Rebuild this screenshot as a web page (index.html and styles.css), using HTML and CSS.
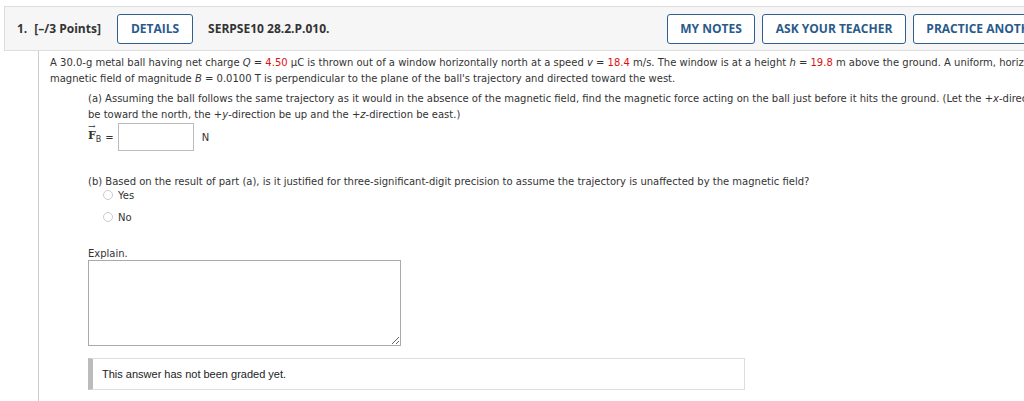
FILE: index.html
```html
<!DOCTYPE html>
<html>
<head>
<meta charset="utf-8">
<link rel="stylesheet" href="styles.css">
</head>
<body>
<div class="question">
  <div class="header">
    <span class="num">1.</span>
    <span class="points">[–/3 Points]</span>
    <button class="btn details">DETAILS</button>
    <span class="code">SERPSE10 28.2.P.010.</span>
    <div class="right">
      <button class="btn rbtn">MY NOTES</button>
      <button class="btn rbtn">ASK YOUR TEACHER</button>
      <button class="btn rbtn">PRACTICE ANOTHER</button>
    </div>
  </div>
  <div class="body">
    <p class="intro">A 30.0-g metal ball having net charge <i>Q</i> = <span class="red">4.50</span> μC is thrown out of a window horizontally north at a speed <i>v</i> = <span class="red">18.4</span> m/s. The window is at a height <i>h</i> = <span class="red">19.8</span> m above the ground. A uniform, horizontal<br>magnetic field of magnitude <i>B</i> = 0.0100 T is perpendicular to the plane of the ball's trajectory and directed toward the west.</p>
    <div class="part">
      <p>(a) Assuming the ball follows the same trajectory as it would in the absence of the magnetic field, find the magnetic force acting on the ball just before it hits the ground. (Let the +<i>x</i>-direction<br>be toward the north, the +<i>y</i>-direction be up and the +<i>z</i>-direction be east.)</p>
      <div class="answer">
        <span class="fb"><span class="vec">F</span><sub>B</sub></span>
        <span class="eq">=</span>
        <input class="ans" type="text">
        <span class="unit">N</span>
      </div>
      <p class="pb">(b) Based on the result of part (a), is it justified for three-significant-digit precision to assume the trajectory is unaffected by the magnetic field?</p>
      <div class="opts">
        <label class="opt"><span class="radio"></span>Yes</label>
        <label class="opt"><span class="radio"></span>No</label>
      </div>
      <p class="explain">Explain.</p>
      <textarea class="ta"></textarea>
      <div class="graded">This answer has not been graded yet.</div>
    </div>
  </div>
</div>
</body>
</html>
```
FILE: styles.css
```css
html, body { margin: 0; padding: 0; overflow: hidden; background: #fff; }
body { font-family: "DejaVu Sans", Verdana, sans-serif; font-size: 10px; color: #333; }
.question { margin: 6px 0 0 4px; width: 1200px; }
.header {
  display: flex; align-items: center; box-sizing: border-box;
  height: 45px; background: #f6f6f6;
  border: 1px solid #ddd; border-right: none;
  padding-left: 12px; width: 1054px;
  font-family: "Open Sans", sans-serif; font-weight: 700; font-size: 12px; color: #333;
}
.num { margin-right: 7px; }
.points { margin-right: 16px; }
.btn {
  font-family: "Open Sans", sans-serif; font-weight: 700; font-size: 12px;
  color: #2a5a8a; background: #fff; border: 1px solid #2f5f90; border-radius: 3px;
  height: 30px; padding: 0 13px; margin: 0;
}
.rbtn { padding: 0 12.5px; }
.details { margin-right: 15px; }
.right { margin-left: auto; display: flex; gap: 7px; }
.body { margin-left: 34px; border-left: 1px solid #ccc; padding: 4px 0 12px 11px; }
p { margin: 0; line-height: 16px; }
.red { color: #d11; }
i { font-style: italic; }
.part { padding-left: 38px; padding-top: 4px; }
.answer { display: flex; align-items: center; height: 28px; margin-top: 0; }
.fb { font-family: "DejaVu Serif", serif; font-weight: bold; font-size: 11px; }
.vec { position: relative; }
.vec::before { content: "→"; position: absolute; left: 0; top: -8px; font-size: 9px; font-weight: normal; }
sub { font-family: "DejaVu Sans", sans-serif; font-weight: normal; font-size: 8px; }
.eq { margin: 0 4px 0 4px; }
.ans { width: 76px; height: 28px; box-sizing: border-box; border: 1px solid #bbb; margin: 0; }
.unit { margin-left: 8px; }
.pb { margin-top: 23px; }
.opts { padding-left: 15px; margin-top: -6px; }
.opt { display: flex; align-items: center; height: 22px; }
.radio { width: 8px; height: 8px; border: 1px solid #ccc; border-radius: 50%; margin-right: 5px; }
.explain { margin-top: 18px; }
.ta { display: block; width: 313px; height: 86px; box-sizing: border-box; border: 1px solid #aaa; margin: -2px 0 0 0; resize: both; }
.graded {
  margin-top: 12px; width: 657px; box-sizing: border-box; height: 32px;
  border: 1px solid #ddd; border-left: 5px solid #bbb;
  font-family: "Liberation Sans", Arial, sans-serif; font-size: 11px; color: #222;
  display: flex; align-items: center; padding-left: 9px;
}
```
